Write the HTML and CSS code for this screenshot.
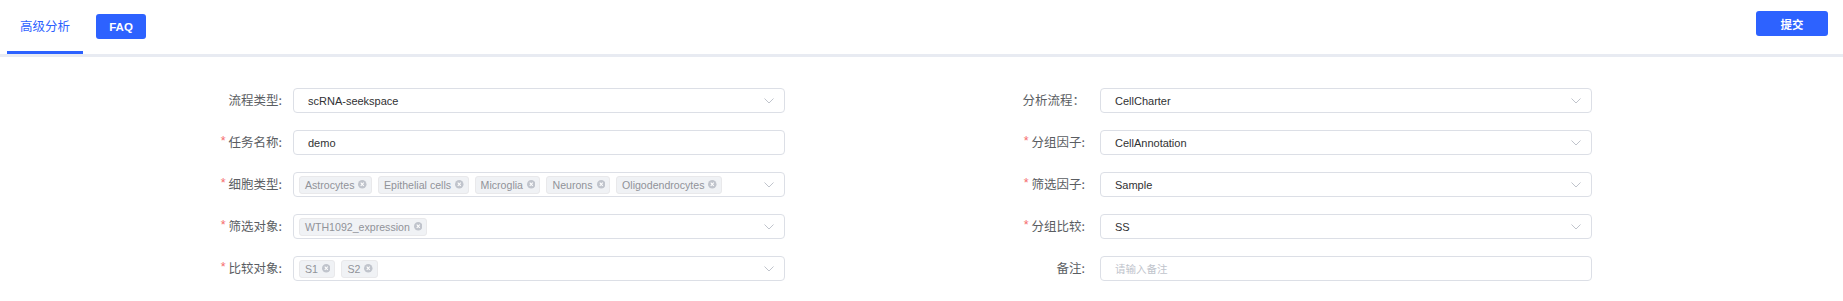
FILE: index.html
```html
<!DOCTYPE html>
<html lang="zh">
<head>
<meta charset="utf-8">
<title>高级分析</title>
<link rel="stylesheet" href="styles.css">
</head>
<body>
<div class="header">
  <div class="tabs">
    <div class="tab active">高级分析</div>
    <button class="btn faq">FAQ</button>
  </div>
  <button class="btn submit">提交</button>
</div>

<div class="form">
  <div class="field">
    <label class="lbl">流程类型:</label>
    <div class="select"><span class="val">scRNA-seekspace</span><svg class="chev" viewBox="0 0 10 6"><polyline points="0.5,0.5 5,5 9.5,0.5"/></svg></div>
  </div>
  <div class="field right">
    <label class="lbl">分析流程：</label>
    <div class="select"><span class="val">CellCharter</span><svg class="chev" viewBox="0 0 10 6"><polyline points="0.5,0.5 5,5 9.5,0.5"/></svg></div>
  </div>

  <div class="field">
    <label class="lbl"><span class="req">*</span>任务名称:</label>
    <div class="select input"><span class="val">demo</span></div>
  </div>
  <div class="field right">
    <label class="lbl"><span class="req">*</span>分组因子:</label>
    <div class="select"><span class="val">CellAnnotation</span><svg class="chev" viewBox="0 0 10 6"><polyline points="0.5,0.5 5,5 9.5,0.5"/></svg></div>
  </div>

  <div class="field">
    <label class="lbl"><span class="req">*</span>细胞类型:</label>
    <div class="select tags">
      <div class="tag-list">
        <span class="tag">Astrocytes<svg class="x" viewBox="0 0 10 10"><circle cx="5" cy="5" r="5"/><path d="M3.2 3.2 L6.8 6.8 M6.8 3.2 L3.2 6.8"/></svg></span>
        <span class="tag">Epithelial cells<svg class="x" viewBox="0 0 10 10"><circle cx="5" cy="5" r="5"/><path d="M3.2 3.2 L6.8 6.8 M6.8 3.2 L3.2 6.8"/></svg></span>
        <span class="tag">Microglia<svg class="x" viewBox="0 0 10 10"><circle cx="5" cy="5" r="5"/><path d="M3.2 3.2 L6.8 6.8 M6.8 3.2 L3.2 6.8"/></svg></span>
        <span class="tag">Neurons<svg class="x" viewBox="0 0 10 10"><circle cx="5" cy="5" r="5"/><path d="M3.2 3.2 L6.8 6.8 M6.8 3.2 L3.2 6.8"/></svg></span>
        <span class="tag">Oligodendrocytes<svg class="x" viewBox="0 0 10 10"><circle cx="5" cy="5" r="5"/><path d="M3.2 3.2 L6.8 6.8 M6.8 3.2 L3.2 6.8"/></svg></span>
      </div>
      <svg class="chev" viewBox="0 0 10 6"><polyline points="0.5,0.5 5,5 9.5,0.5"/></svg>
    </div>
  </div>
  <div class="field right">
    <label class="lbl"><span class="req">*</span>筛选因子:</label>
    <div class="select"><span class="val">Sample</span><svg class="chev" viewBox="0 0 10 6"><polyline points="0.5,0.5 5,5 9.5,0.5"/></svg></div>
  </div>

  <div class="field">
    <label class="lbl"><span class="req">*</span>筛选对象:</label>
    <div class="select tags">
      <div class="tag-list">
        <span class="tag">WTH1092_expression<svg class="x" viewBox="0 0 10 10"><circle cx="5" cy="5" r="5"/><path d="M3.2 3.2 L6.8 6.8 M6.8 3.2 L3.2 6.8"/></svg></span>
      </div>
      <svg class="chev" viewBox="0 0 10 6"><polyline points="0.5,0.5 5,5 9.5,0.5"/></svg>
    </div>
  </div>
  <div class="field right">
    <label class="lbl"><span class="req">*</span>分组比较:</label>
    <div class="select"><span class="val">SS</span><svg class="chev" viewBox="0 0 10 6"><polyline points="0.5,0.5 5,5 9.5,0.5"/></svg></div>
  </div>

  <div class="field">
    <label class="lbl"><span class="req">*</span>比较对象:</label>
    <div class="select tags">
      <div class="tag-list">
        <span class="tag">S1<svg class="x" viewBox="0 0 10 10"><circle cx="5" cy="5" r="5"/><path d="M3.2 3.2 L6.8 6.8 M6.8 3.2 L3.2 6.8"/></svg></span>
        <span class="tag">S2<svg class="x" viewBox="0 0 10 10"><circle cx="5" cy="5" r="5"/><path d="M3.2 3.2 L6.8 6.8 M6.8 3.2 L3.2 6.8"/></svg></span>
      </div>
      <svg class="chev" viewBox="0 0 10 6"><polyline points="0.5,0.5 5,5 9.5,0.5"/></svg>
    </div>
  </div>
  <div class="field right">
    <label class="lbl">备注:</label>
    <div class="select input"><span class="placeholder">请输入备注</span></div>
  </div>
</div>
</body>
</html>
```

FILE: styles.css
```css
* { box-sizing: border-box; }

body {
  margin: 0;
  background: #ffffff;
  font-family: "Liberation Sans", "Noto Sans CJK SC", sans-serif;
  color: #303133;
}

.header {
  display: flex;
  justify-content: space-between;
  align-items: flex-start;
  height: 57px;
  border-bottom: 3px solid #e8ebf2;
}

.tabs {
  display: flex;
  align-items: flex-start;
  margin-left: 7px;
}

.tab {
  height: 54px;
  padding: 0 13px;
  display: flex;
  align-items: center;
  font-family: "Noto Sans CJK SC", sans-serif;
  font-size: 12.5px;
  color: #2d62ff;
  border-bottom: 3px solid #2d62ff;
}

.btn {
  border: none;
  border-radius: 3px;
  background: #2d62ff;
  color: #ffffff;
  font-weight: bold;
  font-family: "Liberation Sans", "Noto Sans CJK SC", sans-serif;
  height: 25px;
  padding: 0;
  cursor: pointer;
}

.faq {
  margin-left: 13px;
  margin-top: 14px;
  width: 50px;
  font-size: 11.5px;
}

.submit {
  margin-top: 11px;
  margin-right: 15px;
  width: 72px;
  font-size: 11.5px;
  font-family: "Noto Sans CJK SC", sans-serif;
}

.form {
  display: grid;
  grid-template-columns: 612px 612px;
  grid-auto-rows: 25px;
  column-gap: 195px;
  row-gap: 17px;
  padding-top: 31px;
  padding-left: 173px;
}

.field {
  display: flex;
  align-items: center;
  height: 25px;
}

.lbl {
  width: 120px;
  height: 25px;
  padding-right: 11px;
  display: flex;
  justify-content: flex-end;
  align-items: center;
  font-family: "Noto Sans CJK SC", sans-serif;
  font-size: 12.5px;
  color: #5a5d62;
  line-height: 1;
  white-space: nowrap;
}

.field.right .lbl {
  padding-right: 15px;
}

.req {
  color: #f56c6c;
  margin-right: 3px;
  font-family: "Liberation Sans", sans-serif;
  line-height: 1;
  align-self: center;
  position: relative;
  top: -1px;
}

.select {
  width: 492px;
  height: 25px;
  border: 1px solid #dcdfe6;
  border-radius: 4px;
  display: flex;
  align-items: center;
  justify-content: space-between;
  padding: 0 10px 0 14px;
  background: #fff;
  flex: none;
}

.select.tags {
  padding-left: 5px;
}

.val {
  font-size: 11px;
  color: #303133;
}

.placeholder {
  font-family: "Noto Sans CJK SC", sans-serif;
  font-size: 10.5px;
  color: #c0c4cc;
}

.chev {
  width: 10px;
  height: 6px;
  flex: none;
  overflow: visible;
}

.chev polyline {
  fill: none;
  stroke: #c0c4cc;
  stroke-width: 1;
}

.tag-list {
  display: flex;
  gap: 6px;
}

.tag {
  display: inline-flex;
  align-items: center;
  height: 18px;
  padding: 0 4px 0 5px;
  background: #f0f2f5;
  border: 1px solid #e9e9eb;
  border-radius: 3px;
  font-size: 10.6px;
  color: #909399;
}

.x {
  width: 8.5px;
  height: 8.5px;
  margin-left: 4px;
}

.x circle { fill: #c0c4cc; }
.x path { stroke: #ffffff; stroke-width: 1.2; fill: none; }
```
